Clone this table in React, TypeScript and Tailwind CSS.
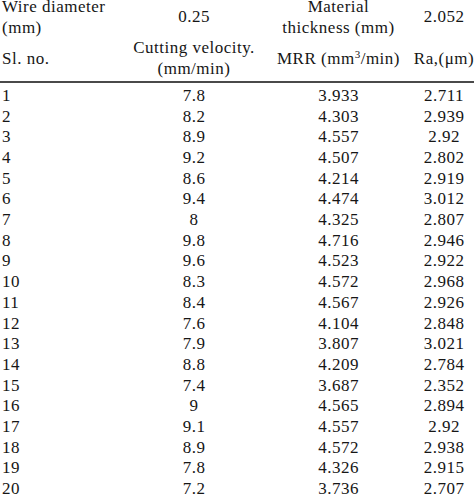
import React from "react";

const rows: [string, string, string, string][] = [
  ["1", "7.8", "3.933", "2.711"],
  ["2", "8.2", "4.303", "2.939"],
  ["3", "8.9", "4.557", "2.92"],
  ["4", "9.2", "4.507", "2.802"],
  ["5", "8.6", "4.214", "2.919"],
  ["6", "9.4", "4.474", "3.012"],
  ["7", "8", "4.325", "2.807"],
  ["8", "9.8", "4.716", "2.946"],
  ["9", "9.6", "4.523", "2.922"],
  ["10", "8.3", "4.572", "2.968"],
  ["11", "8.4", "4.567", "2.926"],
  ["12", "7.6", "4.104", "2.848"],
  ["13", "7.9", "3.807", "3.021"],
  ["14", "8.8", "4.209", "2.784"],
  ["15", "7.4", "3.687", "2.352"],
  ["16", "9", "4.565", "2.894"],
  ["17", "9.1", "4.557", "2.92"],
  ["18", "8.9", "4.572", "2.938"],
  ["19", "7.8", "4.326", "2.915"],
  ["20", "7.2", "3.736", "2.707"],
];

const grid = "grid grid-cols-[120px_148px_141px_70px] w-[479px]";

export default function App() {
  return (
    <div className="w-[474px] h-[504px] overflow-hidden bg-white">
      <div className="-mt-[3px] font-['Liberation_Serif',serif] text-[17px] leading-[20.7px] tracking-[0.5px] text-[#161616]">
        <div className={grid}>
          <div className="pl-[2px]">
            Wire diameter
            <br />
            (mm)
          </div>
          <div className="self-center text-center">0.25</div>
          <div className="text-center">
            Material
            <br />
            thickness (mm)
          </div>
          <div className="self-center text-center">2.052</div>
        </div>
        <div className={grid}>
          <div className="self-center pl-[2px]">Sl. no.</div>
          <div className="text-center">
            Cutting velocity.
            <br />
            (mm/min)
          </div>
          <div className="self-center text-center whitespace-nowrap">
            MRR (mm
            <span className="relative -top-[6px] text-[11px] leading-none">3</span>
            /min)
          </div>
          <div className="self-center text-center whitespace-nowrap">Ra,(μm)</div>
        </div>
        <div className="mt-[1.2px] h-[2px] w-[474px] bg-[#4a4a4a]" />
        <div className="mt-[2.8px]">
          {rows.map((r) => (
            <div key={r[0]} className={grid}>
              <div className="pl-[2px]">{r[0]}</div>
              <div className="text-center">{r[1]}</div>
              <div className="text-center">{r[2]}</div>
              <div className="text-center">{r[3]}</div>
            </div>
          ))}
        </div>
      </div>
    </div>
  );
}
